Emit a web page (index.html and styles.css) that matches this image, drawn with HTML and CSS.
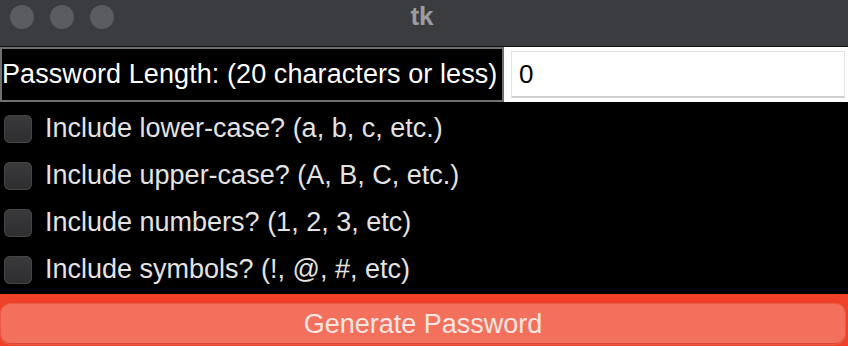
FILE: index.html
```html
<!DOCTYPE html>
<html>
<head>
<meta charset="utf-8">
<link rel="stylesheet" href="styles.css">
</head>
<body>
<div class="window">
  <div class="titlebar">
    <div class="lights"><span class="light"></span><span class="light"></span><span class="light"></span></div>
    <div class="title">tk</div>
  </div>
  <div class="length-row">
    <div class="length-label">Password Length: (20 characters or less)</div>
    <div class="entry-wrap"><div class="entry">0</div></div>
  </div>
  <div class="options">
    <div class="option"><span class="box"></span><span class="opt-text">Include lower-case? (a, b, c, etc.)</span></div>
    <div class="option"><span class="box"></span><span class="opt-text">Include upper-case? (A, B, C, etc.)</span></div>
    <div class="option"><span class="box"></span><span class="opt-text">Include numbers? (1, 2, 3, etc)</span></div>
    <div class="option"><span class="box"></span><span class="opt-text">Include symbols? (!, @, #, etc)</span></div>
  </div>
  <div class="btn-area"><div class="btn">Generate Password</div></div>
</div>
</body>
</html>
```
FILE: styles.css
```css
html, body { margin: 0; padding: 0; background: #000; }
body { font-family: "Liberation Sans", Arial, sans-serif; }
.window { width: 848px; height: 346px; display: flex; flex-direction: column; overflow: hidden; }
.titlebar { height: 46px; background: #3b3c40; border-bottom: 1px solid #111; position: relative; display: flex; align-items: center; flex-shrink: 0; }
.lights { display: flex; gap: 16px; padding-left: 10px; margin-top: -12px; }
.light { width: 24px; height: 24px; border-radius: 50%; background: #5b5c60; }
.title { position: absolute; left: 0; right: 0; top: 1px; text-align: center; color: #9c9c9e; font-weight: bold; font-size: 26px; padding-right: 4px; }
.length-row { display: flex; height: 55px; flex-shrink: 0; }
.length-label { box-sizing: border-box; width: 504px; border: 2px solid #6f6f6f; color: #fff; font-size: 27px; display: flex; align-items: center; padding-left: 0; white-space: nowrap; letter-spacing: 0.08px; }
.entry-wrap { flex: 1; background: #fff; padding: 4px 3px 4px 7px; display: flex; }
.entry { flex: 1; border: 1px solid #e4e4e4; border-bottom: 2px solid #cfcfcf; display: flex; align-items: center; padding-left: 7px; font-size: 26px; color: #000; }
.options { display: flex; flex-direction: column; padding-top: 3px; flex-shrink: 0; }
.option { height: 47px; display: flex; align-items: center; }
.box { width: 28px; height: 28px; margin-left: 4px; margin-right: 13px; border-radius: 6px; background: linear-gradient(#3a3a3c, #2e2e30); box-shadow: inset 0 0 0 1px #444; }
.opt-text { color: #e3e3e3; font-size: 27px; }
.btn-area { flex: 1; background: #ee4127; padding: 10px 3px 2px 1px; display: flex; margin-top: 1px; }
.btn { flex: 1; background: #f2705c; border-radius: 9px; box-shadow: inset 0 -1px 0 #d94a36, 0 0 0 1px #e85a45; display: flex; align-items: center; justify-content: center; color: #fde6e2; font-size: 27px; }
```
